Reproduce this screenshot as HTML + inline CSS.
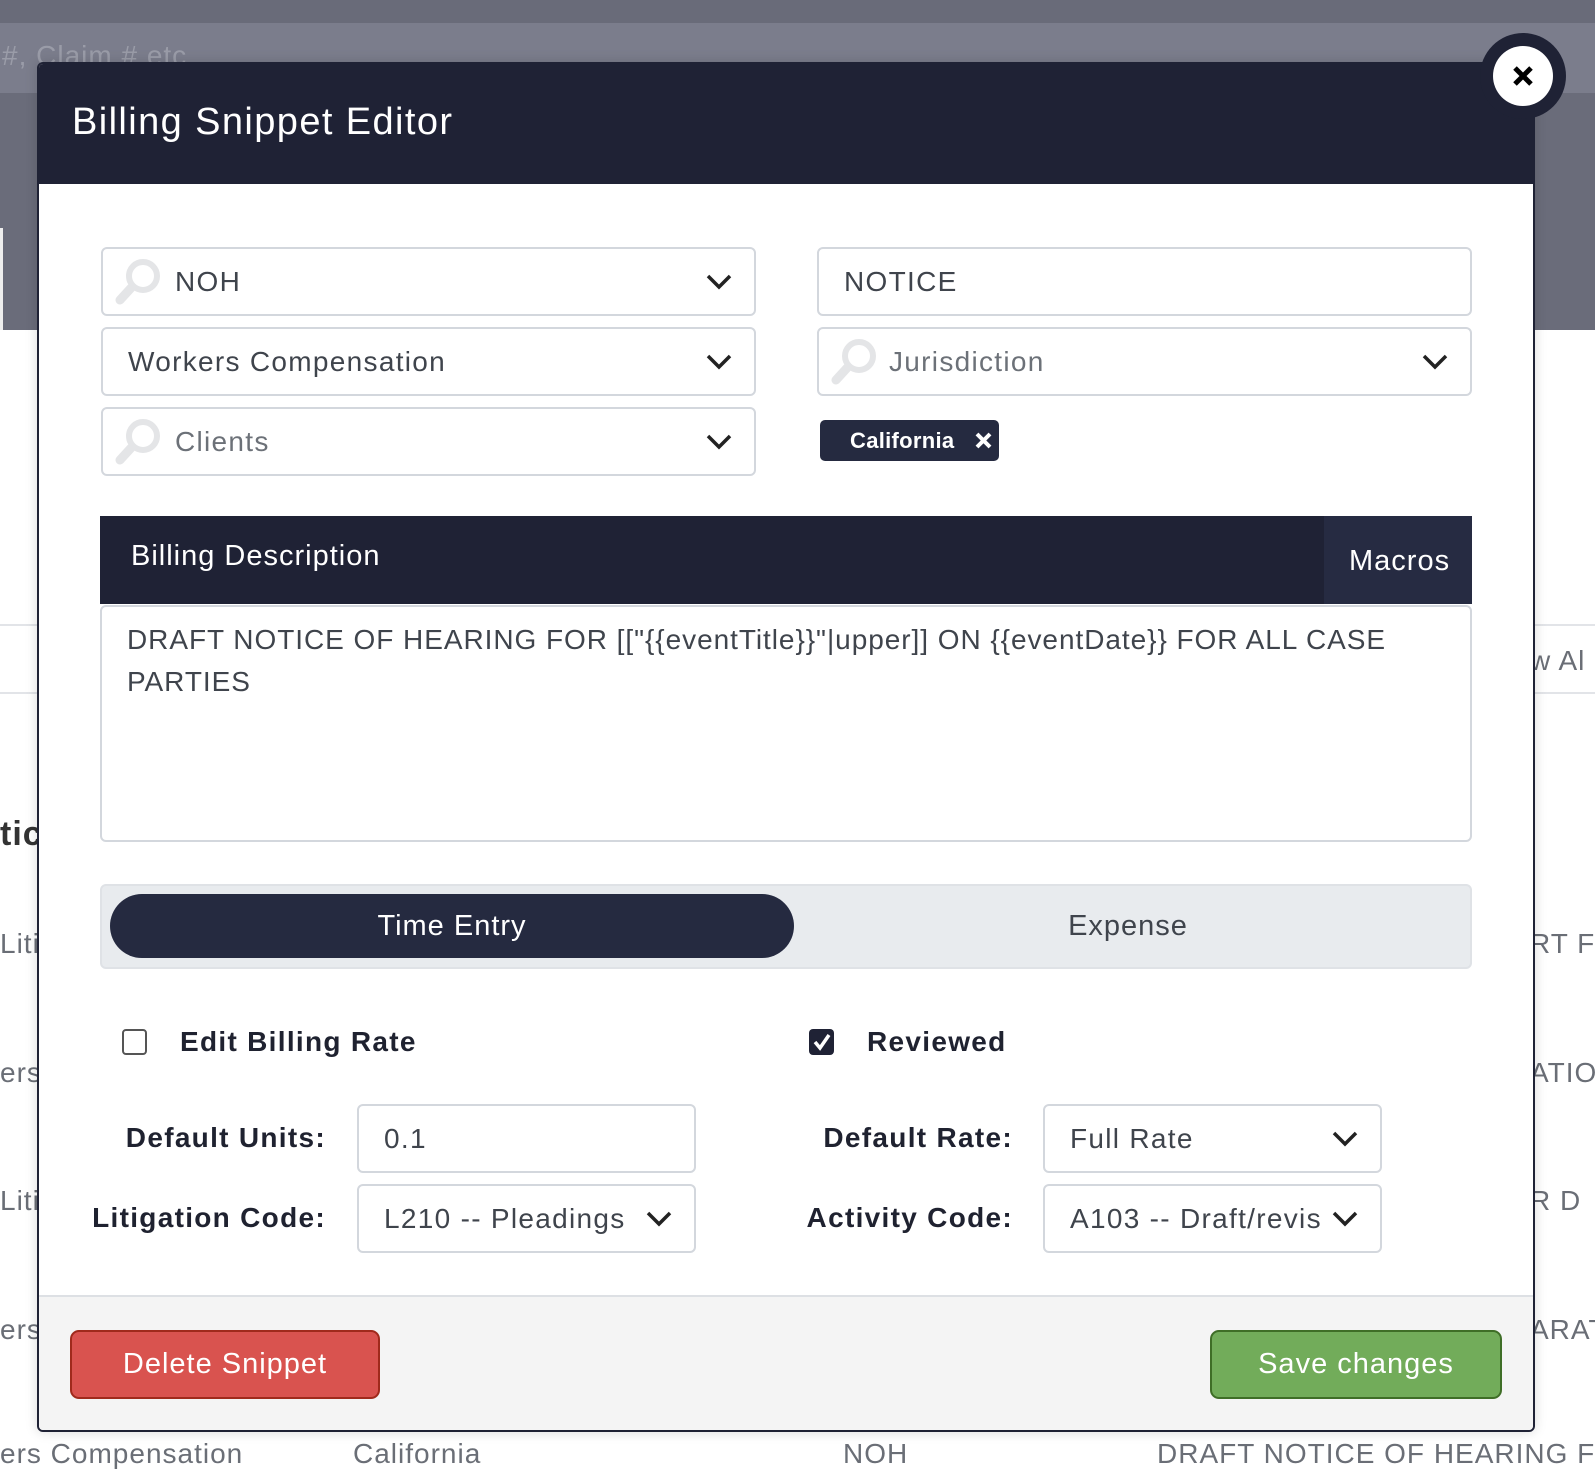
<!DOCTYPE html>
<html><head><meta charset="utf-8"><style>
*{box-sizing:border-box;margin:0;padding:0}
body{width:1595px;height:1479px;position:relative;overflow:hidden;background:#fff;font-family:"Liberation Sans",sans-serif;color:#3c4048}
.a{position:absolute}
.inp{position:absolute;border:2px solid #d3d7dd;border-radius:6px;background:#fff;font-size:28px;color:#3f444c;display:flex;align-items:center;padding-left:25px;letter-spacing:1.3px}
.chev{position:absolute;right:22px;top:50%;margin-top:-9px}
.mag{position:absolute;left:12px;top:9px}
.lbl{position:absolute;font-size:28px;font-weight:bold;color:#1f2230;text-align:right;letter-spacing:1.3px;white-space:nowrap}
.bg{position:absolute;font-size:28px;color:#6a6e76;letter-spacing:1px;white-space:nowrap}
</style></head><body>
<div class="a" style="left:0;top:0;width:1595px;height:23px;background:#696b79"></div>
<div class="a" style="left:0;top:23px;width:1595px;height:70px;background:#7b7d8c"></div>
<div class="a" style="left:0;top:93px;width:1595px;height:237px;background:#6a6c7a"></div>
<div class="a" style="left:0;top:228px;width:3px;height:102px;background:#eee"></div>
<div class="bg" style="left:2px;top:40px;color:#9a9ca8">#, Claim # etc</div>
<div class="a" style="left:0;top:624px;width:1595px;height:2px;background:#e2e4e8"></div>
<div class="a" style="left:0;top:692px;width:1595px;height:2px;background:#e2e4e8"></div>
<div class="bg" style="left:0;top:815px;font-weight:bold;font-size:34px;color:#333">tic</div>
<div class="bg" style="left:0;top:928px">Liti</div>
<div class="bg" style="left:0;top:1057px">ers</div>
<div class="bg" style="left:0;top:1185px">Liti</div>
<div class="bg" style="left:0;top:1314px">ers</div>
<div class="bg" style="left:0;top:1438px">ers Compensation</div>
<div class="bg" style="left:353px;top:1438px">California</div>
<div class="bg" style="left:843px;top:1438px">NOH</div>
<div class="bg" style="left:1157px;top:1438px">DRAFT NOTICE OF HEARING FO</div>
<div class="bg" style="left:1530px;top:645px">w Al</div>
<div class="bg" style="left:1530px;top:928px">RT F</div>
<div class="bg" style="left:1530px;top:1057px">ATIO</div>
<div class="bg" style="left:1530px;top:1185px">R D</div>
<div class="bg" style="left:1530px;top:1314px">ARAT</div>

<div class="a" style="left:37px;top:62px;width:1498px;height:1370px;background:#fff;border:2px solid #1f2235;border-radius:6px;overflow:hidden;box-shadow:0 0 12px rgba(0,0,0,.15)">
 <div class="a" style="left:0;top:0;width:1498px;height:120px;background:#1f2235"></div>
 <div class="a" style="left:33px;top:37px;font-size:38px;color:#fff;letter-spacing:1.4px">Billing Snippet Editor</div>
 <div class="a" style="left:0;top:1231px;width:1498px;height:140px;background:#f4f4f4;border-top:2px solid #dde0e4"></div>
</div>
<div class="a" style="left:1480px;top:33px;width:86px;height:86px;border-radius:50%;background:#1f2235"></div>
<div class="a" style="left:1493px;top:46px;width:60px;height:60px;border-radius:50%;background:#fff"></div>
<svg class="a" style="left:1510px;top:63px" width="26" height="26" viewBox="0 0 26 26"><path d="M5 5L21 21M21 5L5 21" stroke="#000" stroke-width="5"/></svg>

<div class="inp" style="left:101px;top:247px;width:655px;height:69px;padding-left:72px">NOH
 <svg class="mag" width="48" height="50" viewBox="0 0 48 50"><circle cx="28" cy="18" r="14" fill="none" stroke="#e4e5e7" stroke-width="6"/><path d="M16 30L5 42" stroke="#e4e5e7" stroke-width="9" stroke-linecap="round"/></svg>
 <svg class="chev" width="26" height="18" viewBox="0 0 26 18"><path d="M2 3L13 14L24 3" fill="none" stroke="#222" stroke-width="3.5"/></svg></div>
<div class="inp" style="left:817px;top:247px;width:655px;height:69px">NOTICE</div>
<div class="inp" style="left:101px;top:327px;width:655px;height:69px">Workers Compensation
 <svg class="chev" width="26" height="18" viewBox="0 0 26 18"><path d="M2 3L13 14L24 3" fill="none" stroke="#222" stroke-width="3.5"/></svg></div>
<div class="inp" style="left:817px;top:327px;width:655px;height:69px;padding-left:70px;color:#6c7178">Jurisdiction
 <svg class="mag" width="48" height="50" viewBox="0 0 48 50"><circle cx="28" cy="18" r="14" fill="none" stroke="#e4e5e7" stroke-width="6"/><path d="M16 30L5 42" stroke="#e4e5e7" stroke-width="9" stroke-linecap="round"/></svg>
 <svg class="chev" width="26" height="18" viewBox="0 0 26 18"><path d="M2 3L13 14L24 3" fill="none" stroke="#222" stroke-width="3.5"/></svg></div>
<div class="inp" style="left:101px;top:407px;width:655px;height:69px;padding-left:72px;color:#6c7178">Clients
 <svg class="mag" width="48" height="50" viewBox="0 0 48 50"><circle cx="28" cy="18" r="14" fill="none" stroke="#e4e5e7" stroke-width="6"/><path d="M16 30L5 42" stroke="#e4e5e7" stroke-width="9" stroke-linecap="round"/></svg>
 <svg class="chev" width="26" height="18" viewBox="0 0 26 18"><path d="M2 3L13 14L24 3" fill="none" stroke="#222" stroke-width="3.5"/></svg></div>
<div class="a" style="left:820px;top:420px;width:179px;height:41px;background:#252a40;border-radius:5px;color:#fff;font-weight:bold;font-size:22px;line-height:41px;padding-left:30px;letter-spacing:.3px">California</div>
<svg class="a" style="left:975px;top:432px" width="17" height="17" viewBox="0 0 17 17"><path d="M2 2L15 15M15 2L2 15" stroke="#fff" stroke-width="4"/></svg>

<div class="a" style="left:100px;top:516px;width:1372px;height:88px;background:#1f2235"></div>
<div class="a" style="left:1324px;top:516px;width:148px;height:88px;background:#262b42"></div>
<div class="a" style="left:131px;top:540px;font-size:29px;color:#fff;letter-spacing:1px">Billing Description</div>
<div class="a" style="left:1349px;top:545px;font-size:29px;color:#fff;letter-spacing:1px">Macros</div>
<div class="a" style="left:100px;top:605px;width:1372px;height:237px;border:2px solid #d3d7dd;border-radius:6px;font-size:28px;color:#3f444c;padding:12px 25px;line-height:42px;letter-spacing:.95px;white-space:nowrap">DRAFT NOTICE OF HEARING FOR [["{{eventTitle}}"|upper]] ON {{eventDate}} FOR ALL CASE<br>PARTIES</div>

<div class="a" style="left:100px;top:884px;width:1372px;height:85px;background:#e8ebee;border:2px solid #dfe2e6;border-radius:6px"></div>
<div class="a" style="left:110px;top:894px;width:684px;height:64px;background:#252a40;border-radius:32px;color:#fff;font-size:29px;text-align:center;line-height:64px;letter-spacing:1px">Time Entry</div>
<div class="a" style="left:794px;top:894px;width:668px;height:64px;color:#3f444c;font-size:29px;text-align:center;line-height:64px;letter-spacing:1px">Expense</div>

<div class="a" style="left:122px;top:1029px;width:25px;height:26px;border:2px solid #555;border-radius:4px;background:#fff"></div>
<div class="lbl" style="left:180px;top:1026px">Edit Billing Rate</div>
<div class="a" style="left:809px;top:1029px;width:25px;height:26px;background:#1f2235;border-radius:4px"></div>
<svg class="a" style="left:811px;top:1031px" width="22" height="22" viewBox="0 0 22 22"><path d="M4 11L9 17L18 4" fill="none" stroke="#fff" stroke-width="3.5"/></svg>
<div class="lbl" style="left:867px;top:1026px">Reviewed</div>

<div class="lbl" style="left:40px;top:1122px;width:286px">Default Units:</div>
<div class="inp" style="left:357px;top:1104px;width:339px;height:69px">0.1</div>
<div class="lbl" style="left:40px;top:1202px;width:286px">Litigation Code:</div>
<div class="inp" style="left:357px;top:1184px;width:339px;height:69px">L210 -- Pleadings
 <svg class="chev" width="26" height="18" viewBox="0 0 26 18"><path d="M2 3L13 14L24 3" fill="none" stroke="#222" stroke-width="3.5"/></svg></div>
<div class="lbl" style="left:740px;top:1122px;width:273px">Default Rate:</div>
<div class="inp" style="left:1043px;top:1104px;width:339px;height:69px">Full Rate
 <svg class="chev" width="26" height="18" viewBox="0 0 26 18"><path d="M2 3L13 14L24 3" fill="none" stroke="#222" stroke-width="3.5"/></svg></div>
<div class="lbl" style="left:740px;top:1202px;width:273px">Activity Code:</div>
<div class="inp" style="left:1043px;top:1184px;width:339px;height:69px;overflow:hidden;white-space:nowrap"><span style="display:block;width:252px;overflow:hidden">A103 -- Draft/revise</span>
 <svg class="chev" width="26" height="18" viewBox="0 0 26 18"><path d="M2 3L13 14L24 3" fill="none" stroke="#222" stroke-width="3.5"/></svg></div>

<div class="a" style="left:70px;top:1330px;width:310px;height:69px;background:#d9534f;border:2px solid #a02a1c;border-radius:9px;color:#fff;font-size:29px;text-align:center;line-height:65px;letter-spacing:1px">Delete Snippet</div>
<div class="a" style="left:1210px;top:1330px;width:292px;height:69px;background:#72ac5a;border:2px solid #3f6e27;border-radius:9px;color:#fff;font-size:29px;text-align:center;line-height:65px;letter-spacing:1px">Save changes</div>
</body></html>
